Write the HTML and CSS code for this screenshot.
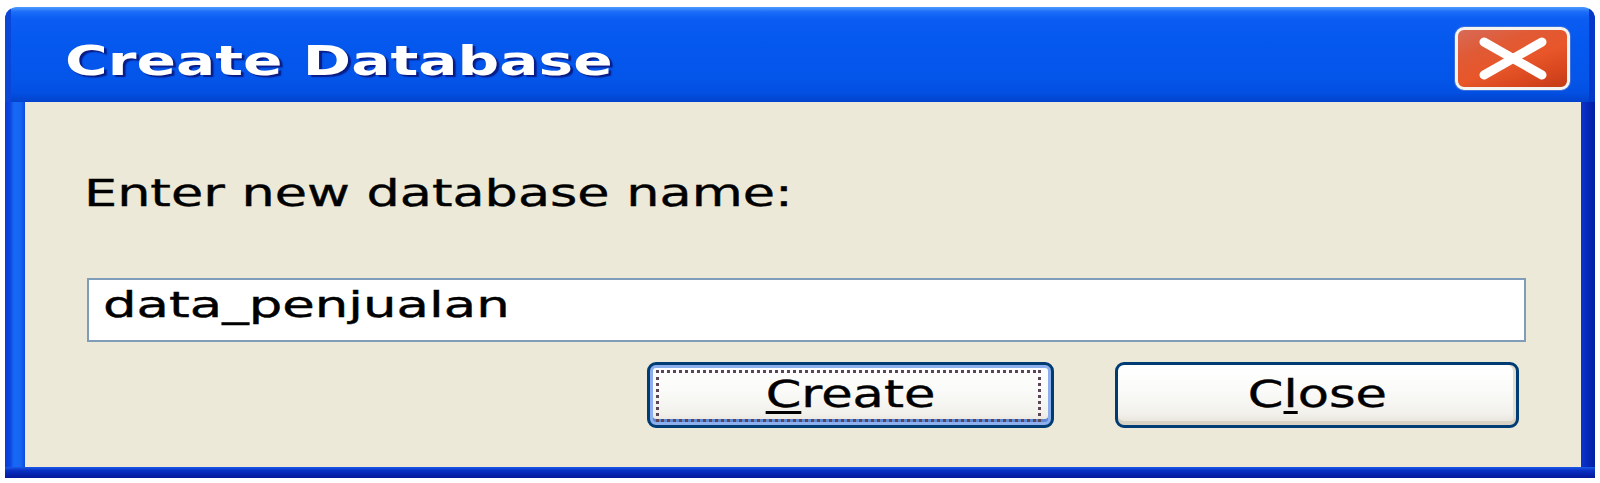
FILE: index.html
```html
<!DOCTYPE html>
<html>
<head>
<meta charset="utf-8">
<link rel="stylesheet" href="styles.css">
</head>
<body>
<div class="window">
  <div class="titlebar">
    <div class="title"><span class="title-text">Create Database</span></div>
    <div class="close-btn">
      <svg class="close-x" viewBox="0 0 109 57" width="109" height="57">
        <path d="M26 12 L84 45 M84 12 L26 45" stroke="#ffffff" stroke-width="9" stroke-linecap="round" fill="none"/>
      </svg>
    </div>
  </div>
  <div class="middle">
    <div class="edge-left"></div>
    <div class="client">
      <div class="label"><span class="label-text">Enter new database name:</span></div>
      <div class="field"><span class="field-text">data_penjualan</span></div>
      <div class="buttons">
        <div class="btn btn-default"><span class="btn-text"><u>C</u>reate</span></div>
        <div class="btn btn-close"><span class="btn-text">C<u>l</u>ose</span></div>
      </div>
    </div>
    <div class="edge-right"></div>
  </div>
  <div class="edge-bottom"></div>
</div>
</body>
</html>
```

FILE: styles.css
```css
html, body {
  margin: 0;
  padding: 0;
  background: #ffffff;
}

body {
  font-family: "DejaVu Sans", "Liberation Sans", sans-serif;
}

.window {
  width: 1590px;
  height: 471px;
  margin: 7px 0 0 5px;
  display: flex;
  flex-direction: column;
  border-radius: 12px 12px 0 0;
  overflow: hidden;
}

.titlebar {
  flex: none;
  height: 95px;
  box-sizing: border-box;
  padding: 20px 25px 0 60px;
  display: flex;
  align-items: flex-start;
  background: linear-gradient(to bottom,
    #4c9aff 0px, #1a6cf8 5px, #0a5cf2 12px, #0558ee 40%,
    #0455ea 75%, #0350e2 90%, #0242cc 100%);
  box-shadow: inset 6px 0 0 #0a46d8, inset -6px 0 0 #0638c8;
}

.title {
  flex: 1;
  margin-top: 10px;
  height: 48px;
  line-height: 48px;
  font-size: 41px;
  font-weight: bold;
  color: #ffffff;
  white-space: nowrap;
}

.title-text {
  display: inline-block;
  transform: scaleX(1.42);
  transform-origin: left center;
  text-shadow: 2px 2px 1px #0a1c86;
}

.close-btn {
  flex: none;
  width: 115px;
  height: 63px;
  box-sizing: border-box;
  border: 3px solid #f4f4f0;
  border-radius: 9px;
  background: linear-gradient(160deg, #d86a58 0%, #e05a34 30%, #e8562a 55%, #d8461e 80%, #c23c16 100%);
  box-shadow: 0 0 0 1px #3a6fe0;
  display: flex;
  align-items: center;
  justify-content: center;
}

.close-x {
  display: block;
}

.middle {
  flex: 1;
  display: flex;
}

.edge-left {
  flex: none;
  width: 20px;
  background: linear-gradient(to right, #0a3ad6 0, #0b46e0 25%, #1868f6 45%, #1664f2 80%, #0b4ad8 100%);
}

.edge-right {
  flex: none;
  width: 14px;
  background: linear-gradient(to right, #0a34cc 0, #0628b8 50%, #041ea4 100%);
}

.edge-bottom {
  flex: none;
  height: 11px;
  background: linear-gradient(to bottom, #1a5ae8 0, #0a32c4 30%, #0622ac 70%, #04189a 100%);
}

.client {
  flex: 1;
  background: #ece9d8;
  padding: 68px 55px 0 62px;
  display: flex;
  flex-direction: column;
}

.label {
  height: 46px;
  line-height: 46px;
  font-size: 38px;
  color: #000000;
  margin-left: -3px;
  white-space: nowrap;
  -webkit-text-stroke: 0.4px #000000;
}

.label-text {
  display: inline-block;
  transform: scaleX(1.38);
  transform-origin: left center;
}

.field {
  margin-top: 62px;
  height: 64px;
  box-sizing: border-box;
  border: 2px solid #7f9db9;
  background: #ffffff;
  padding-left: 14px;
  line-height: 50px;
  font-size: 36px;
  color: #000000;
  white-space: nowrap;
  -webkit-text-stroke: 0.4px #000000;
}

.field-text {
  display: inline-block;
  transform: scaleX(1.47);
  transform-origin: left center;
}

.buttons {
  margin-top: 20px;
  display: flex;
  justify-content: flex-end;
  gap: 61px;
  padding-right: 7px;
}

.btn {
  position: relative;
  height: 66px;
  box-sizing: border-box;
  border: 3px solid #003c74;
  border-radius: 9px;
  background: linear-gradient(to bottom, #ffffff 0%, #fbfbf9 40%, #f2f1ec 80%, #e4e1d6 100%);
  text-align: center;
  line-height: 60px;
  font-size: 37px;
  color: #000000;
  white-space: nowrap;
  -webkit-text-stroke: 0.4px #000000;
}

.btn-default {
  width: 407px;
  box-shadow: inset 0 0 0 3px #8cb0ee, inset 0 -3px 0 3px #5c86d8;
}

.btn-default::after {
  content: "";
  position: absolute;
  top: 5px;
  left: 6px;
  right: 10px;
  bottom: 3px;
  border: 3px dotted #5a4656;
}

.btn-close {
  width: 404px;
  box-shadow: inset 0 -4px 0 #d8d2c4, inset -3px 0 0 #e2ded2;
}

.btn-text {
  display: inline-block;
  transform: scaleX(1.38);
  transform-origin: center center;
}

.btn-text u {
  text-decoration-thickness: 3px;
  text-underline-offset: 4px;
}
```
